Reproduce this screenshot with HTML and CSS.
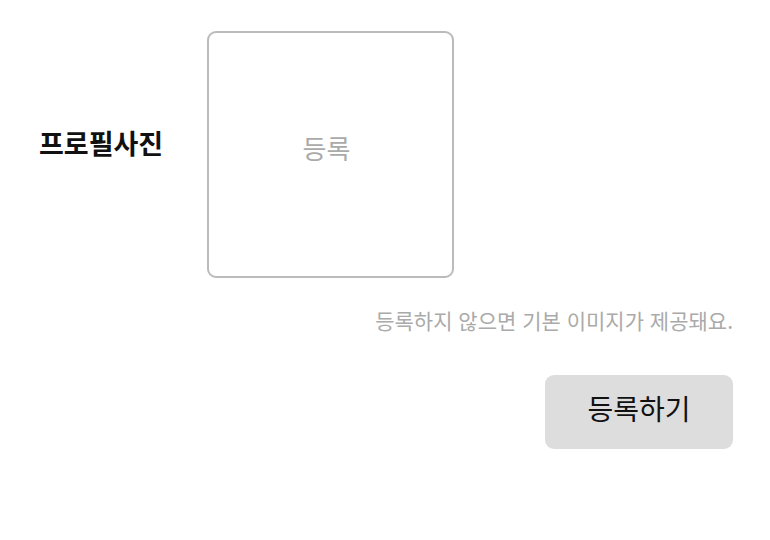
FILE: index.html
```html
<!DOCTYPE html>
<html lang="ko">
<head>
<meta charset="utf-8">
<link rel="stylesheet" href="styles.css">
</head>
<body>
<div class="page">
  <div class="row">
    <div class="label">프로필사진</div>
    <div class="photo">등록</div>
  </div>
  <p class="hint">등록하지 않으면 기본 이미지가 제공돼요.</p>
  <div class="actions">
    <button class="submit">등록하기</button>
  </div>
</div>
</body>
</html>
```
FILE: styles.css
```css
html, body {
  margin: 0;
  padding: 0;
  background: #fff;
}
body {
  font-family: "Noto Sans CJK KR", "Noto Sans", sans-serif;
}
.page {
  width: 770px;
  box-sizing: border-box;
  padding: 31px 37px 0 39px;
}
.row {
  display: flex;
  align-items: center;
  gap: 44px;
}
.label {
  font-size: 27px;
  font-weight: 700;
  color: #111;
  width: 124px;
  margin-top: -24px;
  white-space: nowrap;
}
.photo {
  width: 247px;
  height: 247px;
  box-sizing: border-box;
  border: 2px solid #bbb;
  border-radius: 9px;
  display: flex;
  align-items: center;
  justify-content: center;
  font-size: 26px;
  color: #aaa;
  padding: 0 8px 14px 0;
}
.hint {
  margin: 28px 0 0;
  text-align: right;
  font-size: 21px;
  line-height: 28px;
  color: #aaa;
}
.actions {
  display: flex;
  justify-content: flex-end;
  margin-top: 41px;
}
.submit {
  width: 188px;
  height: 74px;
  border: none;
  border-radius: 9px;
  background: #ddd;
  font-family: inherit;
  font-size: 28px;
  color: #111;
  padding: 0 0 8px;
}
```
